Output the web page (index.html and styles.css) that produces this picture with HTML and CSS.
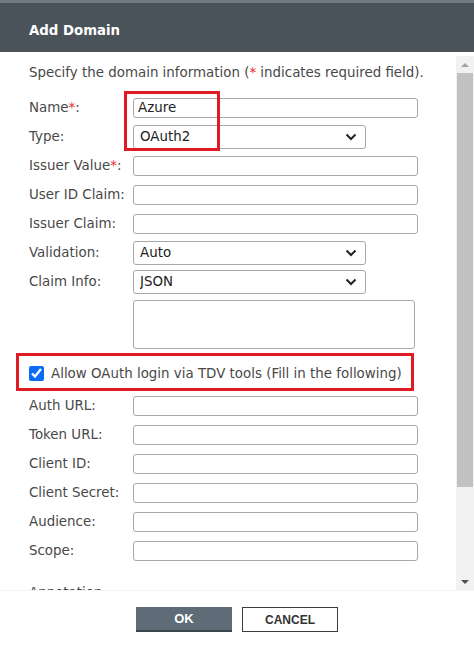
FILE: index.html
```
<!DOCTYPE html>
<html>
<head>
	<meta charset="utf-8">
	<title>Add Domain</title>
	<link rel="stylesheet" href="styles.css">
</head>
<body>
	<div class="dialog">
		<header class="dialog-header">
			<h1>Add Domain</h1>
		</header>

		<div class="dialog-body">
			<div class="content">
				<p class="intro">Specify the domain information (<span class="req">*</span> indicates required field).</p>

				<!-- name + type, marked with the red box -->
				<div class="marked">
					<div class="row">
						<label>Name<span class="req">*</span>:</label>
						<input type="text" class="field" value="Azure">
					</div>
					<div class="row">
						<label>Type:</label>
						<div class="select-wrap">
							<select class="field select"><option>OAuth2</option></select>
							<svg class="chevron" viewBox="0 0 12 8"><path d="M1.5 1.5 6 6l4.5-4.5"/></svg>
						</div>
					</div>
					<div class="highlight"></div>
				</div>

				<div class="row">
					<label>Issuer Value<span class="req">*</span>:</label>
					<input type="text" class="field">
				</div>
				<div class="row">
					<label>User ID Claim:</label>
					<input type="text" class="field">
				</div>
				<div class="row">
					<label>Issuer Claim:</label>
					<input type="text" class="field">
				</div>
				<div class="row">
					<label>Validation:</label>
					<div class="select-wrap">
						<select class="field select"><option>Auto</option></select>
						<svg class="chevron" viewBox="0 0 12 8"><path d="M1.5 1.5 6 6l4.5-4.5"/></svg>
					</div>
				</div>
				<div class="row">
					<label>Claim Info:</label>
					<div class="select-wrap">
						<select class="field select"><option>JSON</option></select>
						<svg class="chevron" viewBox="0 0 12 8"><path d="M1.5 1.5 6 6l4.5-4.5"/></svg>
					</div>
				</div>
				<div class="row row-tall">
					<span></span>
					<textarea class="field area"></textarea>
				</div>

				<!-- oauth toggle -->
				<label class="oauth-toggle">
					<input type="checkbox" checked>
					<span>Allow OAuth login via TDV tools (Fill in the following)</span>
				</label>

				<div class="row">
					<label>Auth URL:</label>
					<input type="text" class="field">
				</div>
				<div class="row">
					<label>Token URL:</label>
					<input type="text" class="field">
				</div>
				<div class="row">
					<label>Client ID:</label>
					<input type="text" class="field">
				</div>
				<div class="row">
					<label>Client Secret:</label>
					<input type="text" class="field">
				</div>
				<div class="row">
					<label>Audience:</label>
					<input type="text" class="field">
				</div>
				<div class="row">
					<label>Scope:</label>
					<input type="text" class="field">
				</div>

				<div class="annotation">Annotation:</div>
			</div>

			<div class="scrollbar">
				<div class="sb-btn"><span class="tri-up"></span></div>
				<div class="sb-thumb"></div>
				<div class="sb-track"></div>
				<div class="sb-btn"><span class="tri-down"></span></div>
			</div>
		</div>

		<footer class="dialog-footer">
			<button class="btn btn-ok">OK</button>
			<button class="btn btn-cancel">CANCEL</button>
		</footer>
	</div>
</body>
</html>
```
FILE: styles.css
```
* {
	margin: 0;
	padding: 0;
	box-sizing: border-box;
}
body {
	font-family: "DejaVu Sans", Verdana, sans-serif;
	font-size: 13.4px;
	color: #484848;
	background: #fff;
	width: 474px;
	height: 660px;
	overflow: hidden;
}

.dialog {
	display: flex;
	flex-direction: column;
	height: 660px;
}

/* header */
.dialog-header {
	height: 52px;
	background: #4b535a;
	border-top: 3px solid #737a80;
	padding: 18px 29px 0;
}
.dialog-header h1 {
	font-size: 13.3px;
	line-height: 20px;
	font-weight: bold;
	color: #fff;
}

/* body */
.dialog-body {
	display: flex;
	height: 538px;
}
.content {
	flex: 1;
	overflow: hidden;
	padding: 11px 0 0 29px;
}
.intro {
	line-height: 20px;
	margin-bottom: 10px;
	white-space: nowrap;
}
.req {
	color: #e8312f;
}

.marked {
	position: relative;
}
.highlight {
	position: absolute;
	left: 95px;
	top: -2px;
	width: 96px;
	height: 60px;
	border: 3px solid #e01b24;
}

.row {
	display: grid;
	grid-template-columns: 104px auto;
	align-items: center;
	height: 29px;
}
.row label {
	white-space: nowrap;
}
.row-tall {
	height: 57px;
}

.field {
	font-family: "DejaVu Sans", Verdana, sans-serif;
	font-size: 13.4px;
	color: #222;
	border: 1px solid #a8a8a8;
	border-radius: 3px;
	background: #fff;
	outline: none;
}
input.field {
	width: 285px;
	height: 20px;
	padding: 0 4px;
}
.select-wrap {
	position: relative;
	width: 233px;
}
.select {
	-webkit-appearance: none;
	appearance: none;
	width: 233px;
	height: 24px;
	padding: 0 6px;
	display: block;
}
.chevron {
	position: absolute;
	right: 9px;
	top: 8px;
	width: 12px;
	height: 8px;
	pointer-events: none;
}
.chevron path {
	fill: none;
	stroke: #222;
	stroke-width: 2;
}
.area {
	width: 282px;
	height: 49px;
	resize: none;
}

.oauth-toggle {
	display: flex;
	align-items: center;
	gap: 7px;
	width: 398px;
	height: 38px;
	margin-left: -13px;
	padding: 3px 0 0 10px;
	border: 3px solid #e01b24;
	white-space: nowrap;
}
.oauth-toggle input {
	width: 15px;
	height: 15px;
	margin: 0;
	accent-color: #0a6cf5;
}

.annotation {
	margin-top: 18px;
	line-height: 20px;
}

/* fake scrollbar */
.scrollbar {
	width: 18px;
	margin-top: 4px;
	display: flex;
	flex-direction: column;
	background: #f1f1f1;
}
.sb-btn {
	height: 17px;
	display: flex;
	align-items: center;
	justify-content: center;
}
.sb-thumb {
	height: 414px;
	background: #c1c1c1;
	margin: 0 1px;
}
.sb-track {
	flex: 1;
}
.tri-up {
	border-left: 4px solid transparent;
	border-right: 4px solid transparent;
	border-bottom: 4px solid #a3a3a3;
}
.tri-down {
	border-left: 4px solid transparent;
	border-right: 4px solid transparent;
	border-top: 4px solid #505050;
}

/* footer */
.dialog-footer {
	flex: 1;
	display: flex;
	justify-content: center;
	gap: 10px;
	padding-top: 16px;
	border-top: 1px solid #f4f4f4;
}
.btn {
	width: 96px;
	height: 25px;
	font-family: "Liberation Sans", Arial, sans-serif;
	font-size: 12px;
	font-weight: bold;
	cursor: pointer;
}
.btn-ok {
	background: #5f6b76;
	color: #fff;
	border: 0;
	border-bottom: 2px solid #3d454c;
	font-size: 13px;
}
.btn-cancel {
	background: #fff;
	color: #333;
	border: 1px solid #3d3d3d;
}
```
